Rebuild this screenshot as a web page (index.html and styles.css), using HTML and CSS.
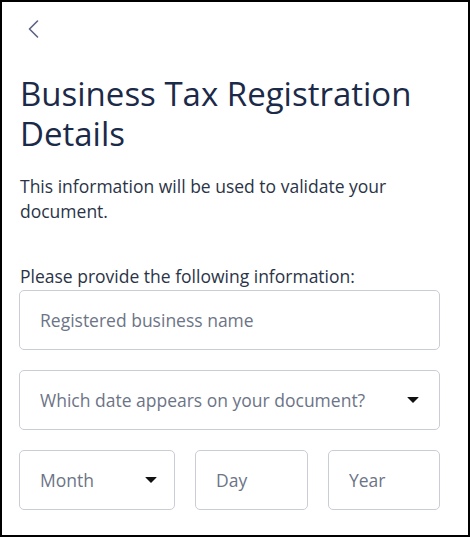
FILE: index.html
```html
<!DOCTYPE html>
<html lang="en">
<head>
    <meta charset="UTF-8">
    <meta name="viewport" content="width=device-width, initial-scale=1.0">
    <title>Business Tax Registration Details</title>
    <link rel="stylesheet" href="styles.css">
</head>
<body>
    <div class="frame">
        <button class="back" type="button" aria-label="Back">
            <svg width="12" height="18" viewBox="0 0 12 18">
                <path d="M9.5 1 L1.5 9 L9.5 17" fill="none" stroke="#5b6283" stroke-width="1.6" stroke-linecap="round" stroke-linejoin="round"/>
            </svg>
        </button>

        <h1 class="title">Business Tax Registration Details</h1>
        <p class="intro">This information will be used to validate your document.</p>

        <form class="form">
            <label class="form-label" for="bizname">Please provide the following information:</label>
            <input class="field" id="bizname" type="text" placeholder="Registered business name">

            <div class="field select" role="button" tabindex="0">
                <span>Which date appears on your document?</span>
                <span class="caret"></span>
            </div>

            <div class="date-row">
                <div class="field select month" role="button" tabindex="0">
                    <span>Month</span>
                    <span class="caret"></span>
                </div>
                <input class="field" type="text" placeholder="Day">
                <input class="field" type="text" placeholder="Year">
            </div>
        </form>
    </div>
</body>
</html>
```

FILE: styles.css
```css
* { margin: 0; padding: 0; box-sizing: border-box; }
body {
    font-family: 'Open Sans', sans-serif;
    background: white;
}
.frame {
    width: 470px;
    height: 537px;
    border: 2px solid #000;
    padding: 0 28px 0 17px;
    overflow: hidden;
}
.back {
    display: block;
    background: none;
    border: none;
    margin: 18px 0 0 9px;
    width: 12px;
    height: 18px;
    cursor: pointer;
}
.back svg { display: block; }
.title {
    margin-top: 36px;
    padding-left: 1px;
    font-size: 33px;
    line-height: 40px;
    font-weight: 400;
    color: #1b2a48;
}
.intro {
    margin-top: 20px;
    padding-left: 1px;
    padding-right: 20px;
    font-size: 17.5px;
    line-height: 25px;
    color: #2b3447;
}
.form {
    margin-top: 40px;
    display: flex;
    flex-direction: column;
    gap: 20px;
}
.form-label {
    display: block;
    padding-left: 1px;
    font-size: 17.5px;
    line-height: 25px;
    color: #2b3447;
    margin-bottom: -19px;
}
.field {
    display: flex;
    align-items: center;
    width: 100%;
    height: 60px;
    padding: 0 20px;
    border: 1px solid #c9cdd6;
    border-radius: 5px;
    background: white;
    font-family: inherit;
    font-size: 17.5px;
    color: #6c7487;
    outline: none;
}
.field::placeholder { color: #6c7487; opacity: 1; }
.select {
    justify-content: space-between;
    cursor: pointer;
}
.caret {
    width: 0;
    height: 0;
    border-left: 6px solid transparent;
    border-right: 6px solid transparent;
    border-top: 6px solid #111;
    border-radius: 1px;
}
.date-row {
    display: grid;
    grid-template-columns: 156px 113px 112px;
    gap: 20px;
}
.month { padding-right: 17px; }
```
